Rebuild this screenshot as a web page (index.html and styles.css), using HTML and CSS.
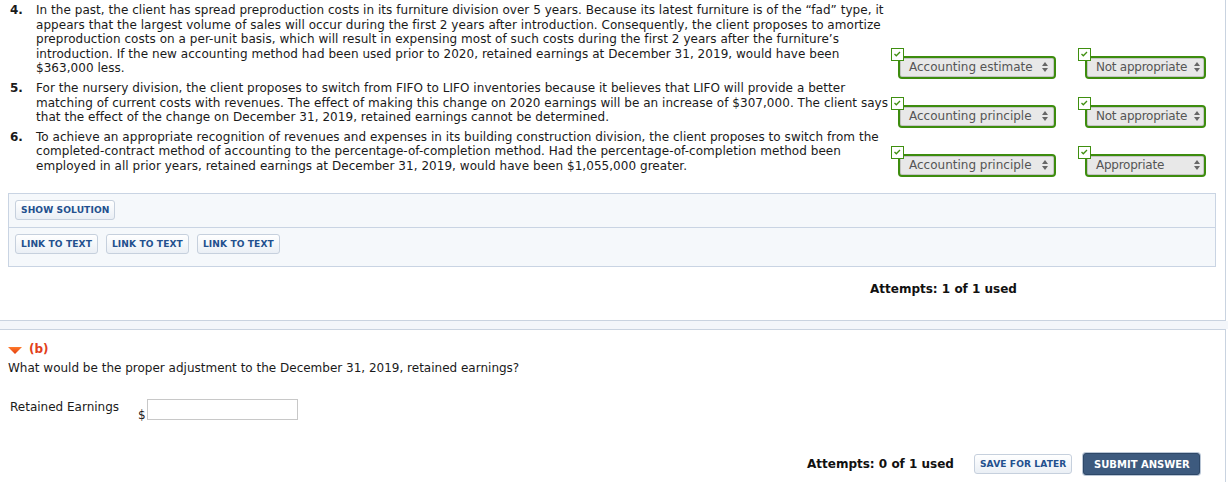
FILE: index.html
```html
<!DOCTYPE html>
<html>
<head>
<meta charset="utf-8">
<link rel="stylesheet" href="styles.css">
</head>
<body>
<div class="page">
  <section class="panel panel-top">
    <div class="questions">
      <div class="q">
        <div class="num">4.</div>
        <div class="text">In the past, the client has spread preproduction costs in its furniture division over 5 years. Because its latest furniture is of the “fad” type, it appears that the largest volume of sales will occur during the first 2 years after introduction. Consequently, the client proposes to amortize preproduction costs on a per-unit basis, which will result in expensing most of such costs during the first 2 years after the furniture’s introduction. If the new accounting method had been used prior to 2020, retained earnings at December 31, 2019, would have been $363,000 less.</div>
        <div class="cell">
          <span class="check"><svg width="11" height="11" viewBox="0 0 11 11"><path d="M2.5 5 L4.3 6.8 L8 3" fill="none" stroke="#3f8f10" stroke-width="1.3"/></svg></span>
          <div class="sel sel-a"><span class="val">Accounting estimate</span><svg class="arr" width="6" height="10" viewBox="0 0 6 10"><path d="M0 4 L3 0 L6 4Z M0 6 L3 10 L6 6Z" fill="#666"/></svg></div>
        </div>
        <div class="cell">
          <span class="check"><svg width="11" height="11" viewBox="0 0 11 11"><path d="M2.5 5 L4.3 6.8 L8 3" fill="none" stroke="#3f8f10" stroke-width="1.3"/></svg></span>
          <div class="sel sel-b"><span class="val">Not appropriate</span><svg class="arr" width="6" height="10" viewBox="0 0 6 10"><path d="M0 4 L3 0 L6 4Z M0 6 L3 10 L6 6Z" fill="#666"/></svg></div>
        </div>
      </div>
      <div class="q">
        <div class="num">5.</div>
        <div class="text">For the nursery division, the client proposes to switch from FIFO to LIFO inventories because it believes that LIFO will provide a better matching of current costs with revenues. The effect of making this change on 2020 earnings will be an increase of $307,000. The client says that the effect of the change on December 31, 2019, retained earnings cannot be determined.</div>
        <div class="cell">
          <span class="check"><svg width="11" height="11" viewBox="0 0 11 11"><path d="M2.5 5 L4.3 6.8 L8 3" fill="none" stroke="#3f8f10" stroke-width="1.3"/></svg></span>
          <div class="sel sel-a"><span class="val">Accounting principle</span><svg class="arr" width="6" height="10" viewBox="0 0 6 10"><path d="M0 4 L3 0 L6 4Z M0 6 L3 10 L6 6Z" fill="#666"/></svg></div>
        </div>
        <div class="cell">
          <span class="check"><svg width="11" height="11" viewBox="0 0 11 11"><path d="M2.5 5 L4.3 6.8 L8 3" fill="none" stroke="#3f8f10" stroke-width="1.3"/></svg></span>
          <div class="sel sel-b"><span class="val">Not appropriate</span><svg class="arr" width="6" height="10" viewBox="0 0 6 10"><path d="M0 4 L3 0 L6 4Z M0 6 L3 10 L6 6Z" fill="#666"/></svg></div>
        </div>
      </div>
      <div class="q">
        <div class="num">6.</div>
        <div class="text">To achieve an appropriate recognition of revenues and expenses in its building construction division, the client proposes to switch from the completed-contract method of accounting to the percentage-of-completion method. Had the percentage-of-completion method been employed in all prior years, retained earnings at December 31, 2019, would have been $1,055,000 greater.</div>
        <div class="cell">
          <span class="check"><svg width="11" height="11" viewBox="0 0 11 11"><path d="M2.5 5 L4.3 6.8 L8 3" fill="none" stroke="#3f8f10" stroke-width="1.3"/></svg></span>
          <div class="sel sel-a"><span class="val">Accounting principle</span><svg class="arr" width="6" height="10" viewBox="0 0 6 10"><path d="M0 4 L3 0 L6 4Z M0 6 L3 10 L6 6Z" fill="#666"/></svg></div>
        </div>
        <div class="cell">
          <span class="check"><svg width="11" height="11" viewBox="0 0 11 11"><path d="M2.5 5 L4.3 6.8 L8 3" fill="none" stroke="#3f8f10" stroke-width="1.3"/></svg></span>
          <div class="sel sel-b"><span class="val">Appropriate</span><svg class="arr" width="6" height="10" viewBox="0 0 6 10"><path d="M0 4 L3 0 L6 4Z M0 6 L3 10 L6 6Z" fill="#666"/></svg></div>
        </div>
      </div>
    </div>

    <div class="solution">
      <div class="sol-row"><span class="btn">SHOW SOLUTION</span></div>
      <div class="sol-row links">
        <span class="btn">LINK TO TEXT</span>
        <span class="btn">LINK TO TEXT</span>
        <span class="btn">LINK TO TEXT</span>
      </div>
    </div>

    <div class="attempts attempts-top">Attempts: 1 of 1 used</div>
  </section>

  <div class="band"></div>

  <section class="panel panel-b">
    <div class="part-head">
      <svg class="tri" width="14" height="7" viewBox="0 0 14 7"><defs><linearGradient id="g" x1="0" y1="0" x2="0" y2="1"><stop offset="0" stop-color="#ff7a2a"/><stop offset="1" stop-color="#e23c10"/></linearGradient></defs><path d="M0 0 H14 L7 7Z" fill="url(#g)"/></svg>
      <span class="part-label">(b)</span>
    </div>
    <div class="prompt">What would be the proper adjustment to the December 31, 2019, retained earnings?</div>
    <div class="re-row">
      <span class="re-label">Retained Earnings</span>
      <span class="dollar">$</span>
      <span class="input"></span>
    </div>
    <div class="footer">
      <span class="attempts">Attempts: 0 of 1 used</span>
      <span class="btn btn-save">SAVE FOR LATER</span>
      <span class="btn-submit">SUBMIT ANSWER</span>
    </div>
  </section>
</div>
</body>
</html>
```

FILE: styles.css
```css
html, body {
  margin: 0;
  padding: 0;
  background: #ffffff;
}

body {
  font-family: "DejaVu Sans", Verdana, sans-serif;
  font-size: 12px;
  color: #1a1a1a;
  width: 1228px;
  height: 482px;
  overflow: hidden;
}

.page {
  width: 1228px;
}

.panel {
  width: 1226px;
  box-sizing: border-box;
  border-right: 1px solid #c9d3e0;
  background: #fff;
}

.panel-top {
  height: 321px;
  border-bottom: 1px solid #c9d3e0;
  padding-top: 3px;
}

.band {
  height: 8px;
  background: #f3f6fa;
}

.panel-b {
  border-top: 1px solid #c9d3e0;
  height: 153px;
}

/* questions */
.questions {
  display: flex;
  flex-direction: column;
  gap: 5px;
}

.q {
  display: grid;
  grid-template-columns: 26px 855px 187px 1fr;
  padding-left: 10px;
  line-height: 14.6px;
}

.num {
  font-weight: bold;
}

.text {
  color: #1a1a1a;
  letter-spacing: 0.04px;
}

.cell {
  align-self: end;
  margin-bottom: -3px;
  display: flex;
  flex-direction: column;
  align-items: flex-start;
}

.check {
  width: 11px;
  height: 11px;
  border: 1px solid #3f8f10;
  background: #fff;
  display: block;
  position: relative;
  z-index: 1;
}

.check svg {
  display: block;
}

.sel {
  margin-top: -5px;
  margin-left: 7px;
  height: 23px;
  box-sizing: border-box;
  border: 2px solid #3d8c0e;
  border-radius: 4px;
  background: #e8e8e8;
  box-shadow: inset 0 0 0 1px #c4c4c4;
  display: flex;
  align-items: center;
  justify-content: space-between;
  padding: 0 6px 0 9px;
  color: #555;
  font-size: 12px;
  line-height: 1;
}

.sel-a { width: 158px; }
.sel-b { width: 121px; padding-left: 9px; padding-right: 4px; }
.sel-b .val { letter-spacing: -0.25px; }

.arr { flex: none; }

/* solution box */
.solution {
  margin: 19px 0 0 8px;
  width: 1208px;
  box-sizing: border-box;
  border: 1px solid #c9d4e3;
  background: #f5f8fb;
}

.sol-row {
  display: flex;
  gap: 8px;
  padding: 6px;
  height: 33px;
  box-sizing: border-box;
}

.sol-row.links {
  border-top: 1px solid #c9d4e3;
  height: 39px;
}

.btn {
  display: inline-flex;
  align-items: center;
  height: 20px;
  box-sizing: border-box;
  padding: 0 5px;
  border: 1px solid #c6d0dd;
  border-radius: 3px;
  background: linear-gradient(#ffffff, #eaeff5);
  color: #23508e;
  font-weight: bold;
  font-size: 9.1px;
  letter-spacing: 0.1px;
}

.attempts {
  font-weight: bold;
  color: #111;
}

.attempts-top {
  padding-left: 870px;
  margin-top: 15px;
}

/* part b */
.part-head {
  display: flex;
  align-items: center;
  gap: 7px;
  padding: 12px 0 0 8px;
  height: 14px;
}

.tri { display: block; margin-top: 2px; }

.part-label {
  color: #e2401a;
  font-weight: bold;
  font-size: 12px;
}

.prompt {
  padding: 5px 0 0 8px;
  line-height: 14px;
}

.re-row {
  display: flex;
  align-items: flex-start;
  padding: 24px 0 0 10px;
  height: 20px;
}

.re-label {
  width: 128px;
  padding-top: 1px;
}

.dollar {
  padding-top: 9px;
  width: 9px;
}

.input {
  width: 151px;
  height: 21px;
  box-sizing: border-box;
  border: 1px solid #c8c8c8;
  background: #fff;
}

.footer {
  display: flex;
  align-items: center;
  padding: 34px 0 0 807px;
  height: 22px;
}

.btn-save {
  margin-left: 20px;
  height: 20px;
}

.btn-submit {
  margin-left: 11px;
  display: inline-flex;
  align-items: center;
  justify-content: center;
  width: 117px;
  height: 22px;
  box-sizing: border-box;
  border-radius: 3px;
  background: #3d5a7e;
  border: 1px solid #2e4868;
  box-shadow: 0 0 0 1px #b9c6d6;
  color: #fff;
  font-weight: bold;
  font-size: 10px;
}
```
